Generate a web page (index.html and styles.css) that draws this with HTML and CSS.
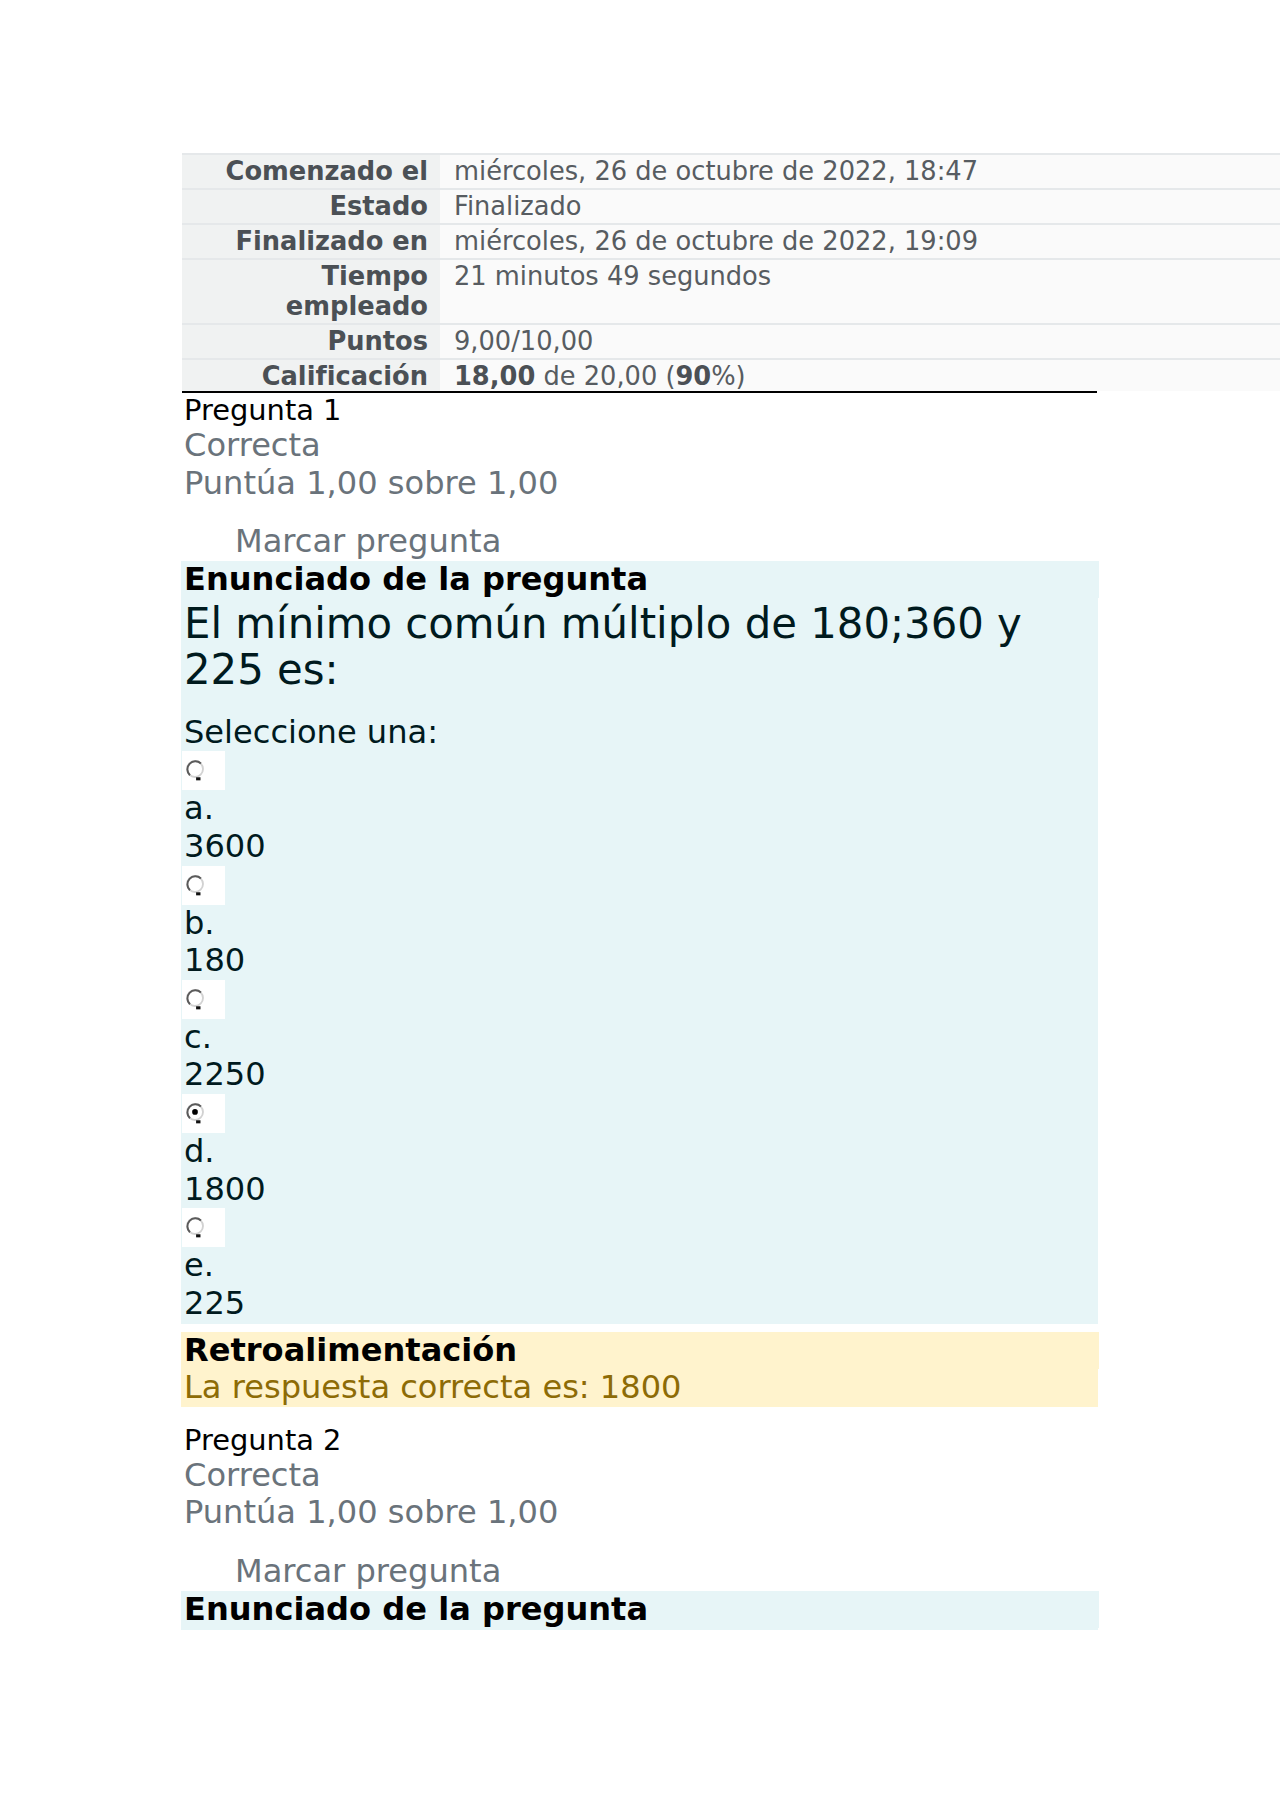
FILE: index.html
```html
<!DOCTYPE html>
<html lang="es">
<head>
<meta charset="utf-8">
<title>Revisión del intento</title>
<link rel="stylesheet" href="styles.css">
</head>
<body>
<div class="page">
  <table class="summary">
    <tr><td class="label">Comenzado el</td><td class="value">miércoles, 26 de octubre de 2022, 18:47</td></tr>
    <tr><td class="label">Estado</td><td class="value">Finalizado</td></tr>
    <tr><td class="label">Finalizado en</td><td class="value">miércoles, 26 de octubre de 2022, 19:09</td></tr>
    <tr><td class="label">Tiempo empleado</td><td class="value">21 minutos 49 segundos</td></tr>
    <tr><td class="label">Puntos</td><td class="value">9,00/10,00</td></tr>
    <tr><td class="label">Calificación</td><td class="value"><b>18,00</b> de 20,00 (<b>90</b>%)</td></tr>
  </table>

  <div class="que first">
    <div class="info">
      <h3 class="qno">Pregunta 1</h3>
      <div class="state">Correcta</div>
      <div class="grade">Puntúa 1,00 sobre 1,00</div>
      <div class="flag">Marcar pregunta</div>
    </div>
    <div class="formulation">
      <h4 class="box-title">Enunciado de la pregunta</h4>
      <div class="qtext">El mínimo común múltiplo de 180;360 y 225 es:</div>
      <div class="prompt">Seleccione una:</div>
      <div class="answer">
        <div class="option">
          <div class="radio"><svg viewBox="0 0 18 21" width="20" height="23"><circle cx="9" cy="10" r="7.3" fill="none" stroke="#d2d2d2" stroke-width="1.7"/><path d="M14.4 5 A7.3 7.3 0 1 0 4.4 15.7" fill="none" stroke="#5a5a5a" stroke-width="1.8"/><rect x="10" y="17.6" width="4" height="2.8" fill="#111"/></svg></div>
          <div class="opt-line">a.</div>
          <div class="opt-line">3600</div>
        </div>
        <div class="option">
          <div class="radio"><svg viewBox="0 0 18 21" width="20" height="23"><circle cx="9" cy="10" r="7.3" fill="none" stroke="#d2d2d2" stroke-width="1.7"/><path d="M14.4 5 A7.3 7.3 0 1 0 4.4 15.7" fill="none" stroke="#5a5a5a" stroke-width="1.8"/><rect x="10" y="17.6" width="4" height="2.8" fill="#111"/></svg></div>
          <div class="opt-line">b.</div>
          <div class="opt-line">180</div>
        </div>
        <div class="option">
          <div class="radio"><svg viewBox="0 0 18 21" width="20" height="23"><circle cx="9" cy="10" r="7.3" fill="none" stroke="#d2d2d2" stroke-width="1.7"/><path d="M14.4 5 A7.3 7.3 0 1 0 4.4 15.7" fill="none" stroke="#5a5a5a" stroke-width="1.8"/><rect x="10" y="17.6" width="4" height="2.8" fill="#111"/></svg></div>
          <div class="opt-line">c.</div>
          <div class="opt-line">2250</div>
        </div>
        <div class="option">
          <div class="radio"><svg viewBox="0 0 18 21" width="20" height="23"><circle cx="9" cy="10" r="7.3" fill="none" stroke="#d2d2d2" stroke-width="1.7"/><path d="M14.4 5 A7.3 7.3 0 1 0 4.4 15.7" fill="none" stroke="#5a5a5a" stroke-width="1.8"/><circle cx="9" cy="10" r="2.6" fill="#000"/><rect x="10" y="17.6" width="4" height="2.8" fill="#111"/></svg></div>
          <div class="opt-line">d.</div>
          <div class="opt-line">1800</div>
        </div>
        <div class="option">
          <div class="radio"><svg viewBox="0 0 18 21" width="20" height="23"><circle cx="9" cy="10" r="7.3" fill="none" stroke="#d2d2d2" stroke-width="1.7"/><path d="M14.4 5 A7.3 7.3 0 1 0 4.4 15.7" fill="none" stroke="#5a5a5a" stroke-width="1.8"/><rect x="10" y="17.6" width="4" height="2.8" fill="#111"/></svg></div>
          <div class="opt-line">e.</div>
          <div class="opt-line">225</div>
        </div>
      </div>
    </div>
    <div class="outcome">
      <h4 class="box-title">Retroalimentación</h4>
      <div class="rightanswer">La respuesta correcta es: 1800</div>
    </div>
  </div>

  <div class="que second">
    <div class="info">
      <h3 class="qno">Pregunta 2</h3>
      <div class="state">Correcta</div>
      <div class="grade">Puntúa 1,00 sobre 1,00</div>
      <div class="flag">Marcar pregunta</div>
    </div>
    <div class="formulation">
      <h4 class="box-title">Enunciado de la pregunta</h4>
    </div>
  </div>
</div>
</body>
</html>
```

FILE: styles.css
```css
* {
  box-sizing: border-box;
}

html,
body {
  margin: 0;
  padding: 0;
  background: #ffffff;
  overflow: hidden;
}

body {
  font-family: "DejaVu Sans", "Liberation Sans", sans-serif;
  width: 1280px;
  height: 1811px;
}

.page {
  padding: 153px 0 0 182px;
  width: 1280px;
}

/* ---------- summary table ---------- */
.summary {
  border-collapse: separate;
  border-spacing: 0;
  width: 1160px;
  font-size: 25.7px;
  line-height: 30px;
}

.summary td {
  border-top: 2px solid #e5e8ea;
  padding: 1px 12px 2px 14px;
  vertical-align: top;
}

.summary tr:last-child td {
  padding-bottom: 0;
}

.summary .label {
  width: 258px;
  text-align: right;
  font-weight: bold;
  color: #4b5055;
  background: #f0f2f2;
}

.summary .value {
  color: #575c61;
  background: #fafafa;
}

.summary .value b {
  color: #4b5055;
}

/* ---------- question ---------- */
.que {
  width: 915px;
}

.que.first {
  border-top: 2px solid #000000;
}

.que.second {
  margin-top: 16px;
}

.info {
  padding-left: 2px;
}

.qno {
  margin: 0;
  font-size: 28.9px;
  line-height: 34px;
  font-weight: normal;
  color: #000000;
}

.state,
.grade {
  font-size: 32.1px;
  line-height: 37.6px;
  color: #6a737b;
}

.flag {
  margin-top: 21px;
  padding-left: 51px;
  font-size: 32.1px;
  line-height: 37.6px;
  color: #6a737b;
}

.formulation {
  margin: 0 -1px 0 -1px;
  padding: 0 0 1.4px 3px;
  background: #e7f5f7;
  color: #001a1e;
}

.box-title {
  margin: 0 -1px 0 0;
  font-size: 32.1px;
  line-height: 37.6px;
  font-weight: bold;
  color: #000000;
}

.formulation .box-title {
  background: #e7f5f7;
}

.qtext {
  padding-top: 2.4px;
  font-size: 41.8px;
  line-height: 46.5px;
}

.prompt {
  margin-top: 20px;
  font-size: 32.1px;
  line-height: 37.6px;
}

.answer {
  display: flex;
  flex-direction: column;
}

.option {
  display: flex;
  flex-direction: column;
}

.radio {
  width: 43px;
  height: 39px;
  margin-left: -2px;
  background: #ffffff;
  padding: 7px 0 0 3px;
}

.radio svg {
  display: block;
}

.opt-line {
  font-size: 32.1px;
  line-height: 37.6px;
}

/* ---------- feedback ---------- */
.outcome {
  margin: 8px -1px 0 -1px;
  padding-left: 3px;
  background: #fff3cd;
}

.outcome .box-title {
  background: #fff3cd;
}

.rightanswer {
  font-size: 32.1px;
  line-height: 37.6px;
  color: #8d6b06;
}
```
